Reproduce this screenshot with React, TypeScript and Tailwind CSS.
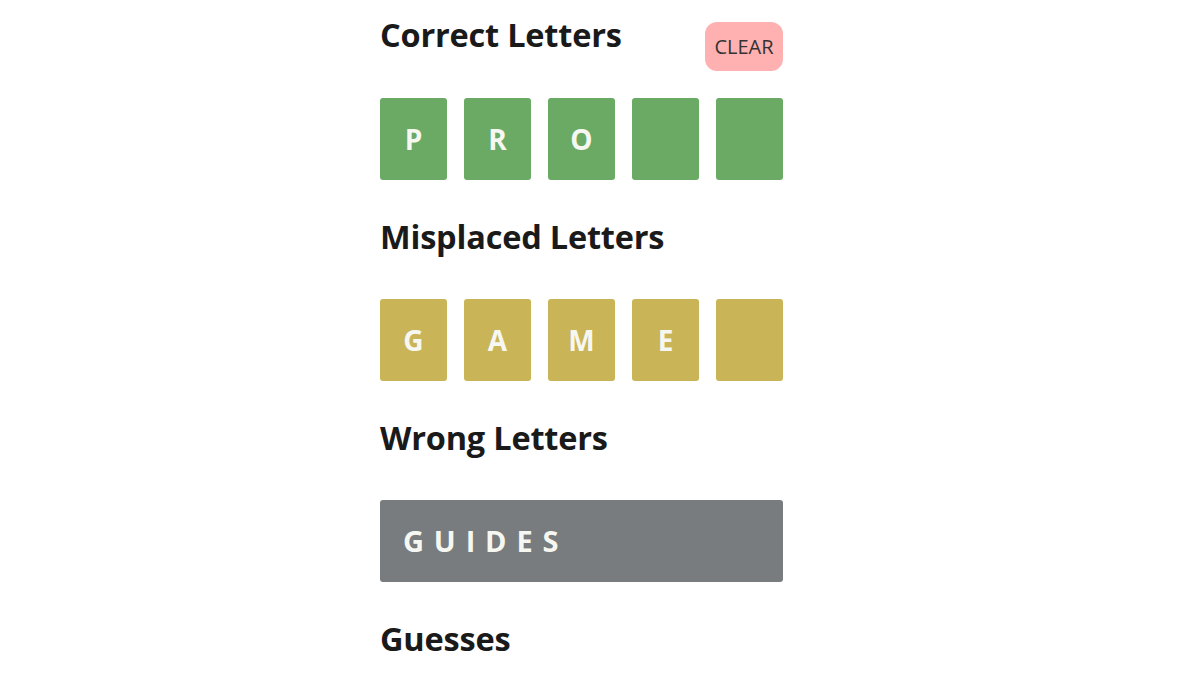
import React from "react";

const font = { fontFamily: '"Open Sans", "Noto Sans", sans-serif' };

function Tile({ letter, color }: { letter?: string; color: string }) {
  return (
    <div
      className={`w-[67px] h-[82px] rounded-[3px] flex items-center justify-center text-[28px] font-bold text-[#f7f7f2] ${color}`}
    >
      {letter}
    </div>
  );
}

function Heading({ children }: { children: React.ReactNode }) {
  return (
    <h2 className="h-10 leading-10 text-[32.5px] font-bold text-[#1a1a1a] tracking-[-0.2px]">
      {children}
    </h2>
  );
}

export default function App() {
  const correct = ["P", "R", "O", "", ""];
  const misplaced = ["G", "A", "M", "E", ""];

  return (
    <div className="w-[1200px] h-[675px] overflow-hidden bg-white" style={font}>
      <div className="ml-[380px] w-[403px] pt-[15px]">
        {/* correct */}
        <div className="flex h-10 justify-between items-start">
          <Heading>Correct Letters</Heading>
          <button className="mt-[7px] h-[49px] w-[78px] rounded-[12px] bg-[#ffb1b1] text-[20px] text-[#333] flex items-center justify-center">
            CLEAR
          </button>
        </div>
        <div className="mt-[43px] flex justify-between">
          {correct.map((l, i) => (
            <Tile key={i} letter={l} color="bg-[#6aaa64]" />
          ))}
        </div>

        {/* misplaced */}
        <div className="mt-[37px]">
          <Heading>Misplaced Letters</Heading>
        </div>
        <div className="mt-[42px] flex justify-between">
          {misplaced.map((l, i) => (
            <Tile key={i} letter={l} color="bg-[#c9b458]" />
          ))}
        </div>

        {/* wrong */}
        <div className="mt-[37px]">
          <Heading>Wrong Letters</Heading>
        </div>
        <div className="mt-[42px] h-[82px] rounded-[3px] bg-[#787c7e] flex items-center pl-[23px] text-[29px] font-bold tracking-[0.34em] text-[#f7f7f2]">
          GUIDES
        </div>

        {/* guesses */}
        <div className="mt-[37px]">
          <Heading>Guesses</Heading>
        </div>
      </div>
    </div>
  );
}
